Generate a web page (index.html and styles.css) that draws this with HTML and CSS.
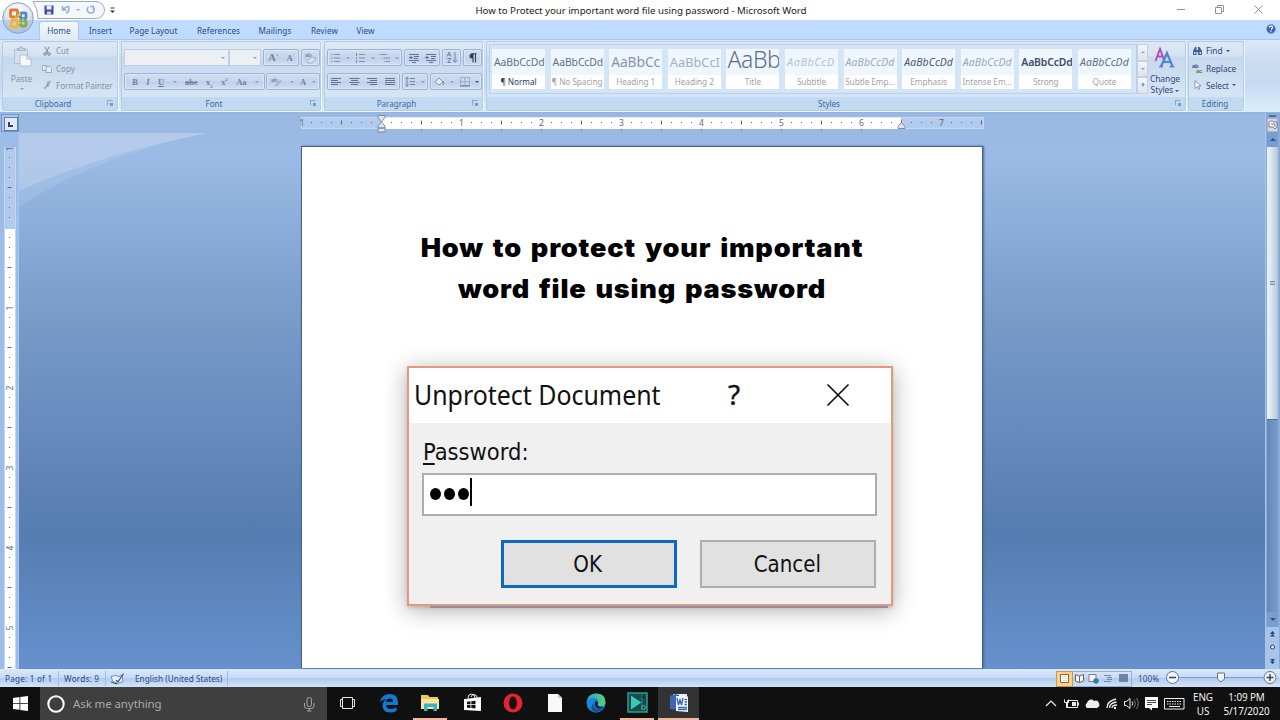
FILE: index.html
```html
<!DOCTYPE html>
<html lang="en">
<head>
<meta charset="utf-8">
<title>How to Protect your important word file using password - Microsoft Word</title>
<link rel="stylesheet" href="styles.css">
</head>
<body>
<div class="app">
  <header class="titlebar">
    <svg class="qat" width="122" height="20" viewBox="0 0 122 20">
      <path d="M33 1.5H96a8.5 8.5 0 0 1 0 17H38Q38 9 33 1.5Z" fill="#f4f7fb" stroke="#8d949e" stroke-width=".8"/>
      <path d="M44.500 5.500h9v9h-9z" fill="#4548a8"/><path d="M46.500 5.500h5v4h-5z" fill="#eef"/><path d="M47 11.500h4v3h-4z" fill="#ccd3ee"/>
      <path d="M62.500 6v4h4M63 9.500Q69 4 69 9q0 3-3 4" fill="none" stroke="#93a9ce" stroke-width="1.500"/>
      <path d="M76 9h4l-2 2z" fill="#a6abb8"/>
      <path d="M88.500 7a3.500 3.500 0 1 0 4.500 0M93.500 10V6.500H90" fill="none" stroke="#93a9ce" stroke-width="1.500"/>
      <path d="M110.500 7.500h4v1h-4zM110 10.500h5l-2.500 2.500z" fill="#333"/>
    </svg>
    <div class="title"><span>How to Protect your important word file using password - Microsoft Word</span></div>
    <svg class="wincontrols" width="120" height="20" viewBox="1160 0 120 20" fill="none" stroke="#888" stroke-width=".9">
      <path d="M1177 9.500h8M1254.500 5.500l8 8m0-8l-8 8M1215.500 7.500h6v6h-6zM1217.500 7.500v-2h6v6h-2"/>
    </svg>
  </header>

  <nav class="tabs">
    <div class="tab w-home active">Home</div><div class="tab w-insert">Insert</div><div class="tab w-layout">Page Layout</div><div class="tab w-refs">References</div><div class="tab w-mail">Mailings</div><div class="tab w-review">Review</div><div class="tab w-view">View</div>
    <svg class="help" width="12" height="12" viewBox="0 0 12 12"><circle cx="6" cy="6" r="4.500" fill="#3464b4" stroke="#86a7d7"/><path d="M4.300 4.600Q4.500 3.200 6 3.200T7.600 4.600Q7.600 5.500 6 6.400M6 7.600v1.200" stroke="#fff" stroke-width="1.200" fill="none"/></svg>
  </nav>

  <section class="ribbon">
    <div class="group g-clip">
      <div class="body clip">
        <div class="paste">
          <svg width="22" height="23" viewBox="0 0 22 23"><path d="M3.500 3.500h13v14h-13z" fill="#d5e0ee" stroke="#b4c1d2"/><path d="M6.500 4.500v-2h2l1-1.500h1.500l1 1.500h2v2z" fill="#c6d1df" stroke="#99a8ba" stroke-width=".8"/><path d="M9 9h7l4 4v7H9z" fill="#f5f8fc" stroke="#a9b7c9" stroke-width=".8"/><path d="M16 9v4h4" fill="none" stroke="#a9b7c9"/></svg>
          <span>Paste</span><i class="caret"></i>
        </div>
        <div class="clipcmds">
          <div><svg width="10" height="10" viewBox="0 0 10 10" fill="none" stroke="#7889a5"><path d="M3 1l3 6M7 1L4 7"/><circle cx="3" cy="8" r="1.300"/><circle cx="7" cy="8" r="1.300"/></svg>Cut</div>
          <div><svg width="10" height="10" viewBox="0 0 10 10" fill="#e5edf7" stroke="#8c9db5" stroke-width=".8"><path d="M.5 2.500h4l1 1v4h-5z"/><path d="M4 3.500h3.500l2 2v4H4z"/></svg>Copy</div>
          <div><svg width="10" height="10" viewBox="0 0 10 10"><path d="M9 .5L7.500 4.500 3.500 9 1 8l3-2L5.500 1.500z" fill="#9caec7"/><path d="M5 5l2 1" stroke="#6d83a5"/></svg>Format Painter</div>
        </div>
      </div>
      <div class="glabel">Clipboard<b class="launch"></b></div>
    </div>

    <div class="group g-font">
      <div class="body rows">
        <div class="row">
          <div class="combo c1"><i class="caret"></i></div><div class="combo c2"><i class="caret"></i></div>
          <div class="btns b-grow"><span class="srf big">A<sup>^</sup></span><span class="srf">A<sup>ˇ</sup></span></div>
          <div class="btns b-clear"><svg width="14" height="14" viewBox="0 0 14 14"><text x="1" y="6" class="tiny">ab</text><path d="M3 10l5-4 4 1-4 5H4z" fill="#d9e2ef" stroke="#8c9db8" stroke-width=".7"/></svg></div>
        </div>
        <div class="row">
          <div class="btns b-fmt"><span class="srf">B</span><span class="srf it">I</span><span class="srf un">U</span><i class="caret"></i><span class="srf st">abc</span><span class="srf">x<sub>2</sub></span><span class="srf">x<sup>2</sup></span><span class="srf">Aa</span><i class="caret"></i></div>
          <div class="btns b-color"><svg width="14" height="12" viewBox="0 0 14 12"><text x="1" y="6" class="tiny">ab</text><path d="M4 10l6-6 2 1-5 5z" fill="#a8b6cb"/></svg><i class="caret"></i><span class="srf">A</span><i class="caret"></i></div>
        </div>
      </div>
      <div class="glabel">Font<b class="launch"></b></div>
    </div>

    <div class="group g-para">
      <div class="body rows">
        <div class="row p">
          <div class="btns p1">
            <svg width="12" height="12" viewBox="0 0 12 12" stroke="#7689aa" stroke-width=".9"><path d="M1 2.500h1.500M1 6h1.500M1 9.500h1.500M4 2.500h6M4 6h6M4 9.500h6"/></svg><i class="caret"></i>
            <svg width="12" height="12" viewBox="0 0 12 12" stroke="#7689aa" stroke-width=".9"><path d="M1.500 1v3M1.500 5v2M1.500 8v3M4 2.500h6M4 6h6M4 9.500h6"/></svg><i class="caret"></i>
            <svg width="12" height="12" viewBox="0 0 12 12" stroke="#7689aa" stroke-width=".9"><path d="M0 2.500h1M2 2.500h6M3 6h1M5 6h6M5 9.500h1M7 9.500h4"/></svg><i class="caret"></i>
          </div>
          <div class="btns p2">
            <svg width="12" height="12" viewBox="0 0 12 12" stroke="#5f7295"><path d="M1 2.500h10M6 4.500h5M6 6.500h4M1 8.500h10M4 10.500h4M1 5.500h4M3 4v3"/></svg>
            <svg width="12" height="12" viewBox="0 0 12 12" stroke="#5f7295"><path d="M1 2.500h10M6 4.500h5M6 6.500h4M1 8.500h10M4 10.500h4M0 5.500h4M2 4v3"/></svg>
          </div>
          <div class="btns p3"><svg width="12" height="13" viewBox="0 0 12 13" fill="none" stroke="#7186a9"><path d="M1 5.500L3 1l2 4.500M2 4h2M1.500 7.500H5l-3.500 4H5M9 1v10M7 9l2 2.500L11 9"/></svg></div>
          <div class="btns p4"><svg width="10" height="12" viewBox="0 0 10 12"><path d="M5 2v8.500M7.500 2v8.500M3.500 1.800h5" stroke="#343e54" stroke-width="1.100"/><path d="M5 1.500H4a2.300 2.300 0 0 0 0 5h1z" fill="#343e54"/></svg></div>
        </div>
        <div class="row p">
          <div class="btns p5">
            <svg width="11" height="10" viewBox="0 0 11 10" stroke="#5f7295"><path d="M0 1.500h10M0 3.500h7M0 5.500h10M0 7.500h7"/></svg>
            <svg width="11" height="10" viewBox="0 0 11 10" stroke="#5f7295"><path d="M.5 1.500h10M2 3.500h7M.5 5.500h10M2 7.500h7"/></svg>
            <svg width="11" height="10" viewBox="0 0 11 10" stroke="#5f7295"><path d="M0 1.500h10M3 3.500h7M0 5.500h10M3 7.500h7"/></svg>
            <svg width="11" height="10" viewBox="0 0 11 10" stroke="#5f7295"><path d="M0 1.500h10M0 3.500h10M0 5.500h10M0 7.500h10"/></svg>
          </div>
          <div class="btns p6"><svg width="12" height="12" viewBox="0 0 12 12" fill="none" stroke="#7186a9"><path d="M2 1v9M.5 3L2 1l1.500 2M.5 8.500L2 10.500l1.500-2M5 2.500h5M5 5.500h5M5 8.500h5"/></svg><i class="caret"></i></div>
          <div class="btns p7"><svg width="13" height="12" viewBox="0 0 13 12"><path d="M2 6l4-4 4 4-4 3z" fill="#e6eef8" stroke="#8497b6"/><path d="M10 5q2 3 0 4" stroke="#667da3" fill="none"/></svg><i class="caret"></i><svg width="12" height="12" viewBox="0 0 12 12" fill="none" stroke="#8497b6"><path d="M1.500 1.500h9v8h-9zM6 1.500v8M1.500 5.500h9" stroke-dasharray="1 .6"/><path d="M1 10h10" stroke="#5f7295"/></svg><i class="caret dk"></i></div>
        </div>
      </div>
      <div class="glabel">Paragraph<b class="launch"></b></div>
    </div>

    <div class="group g-styles">
      <div class="body stylesbody">
        <div class="gallery">
          <div class="st-item"><p>AaBbCcDd</p><span class="on">¶ Normal</span></div>
          <div class="st-item"><p>AaBbCcDd</p><span>¶ No Spacing</span></div>
          <div class="st-item"><p class="h1">AaBbCc</p><span>Heading 1</span></div>
          <div class="st-item"><p class="h2">AaBbCcI</p><span>Heading 2</span></div>
          <div class="st-item"><p class="ttl">AaBb</p><span>Title</span></div>
          <div class="st-item"><p class="sub">AaBbCcD</p><span>Subtitle</span></div>
          <div class="st-item"><p class="se">AaBbCcDd</p><span>Subtle Emp...</span></div>
          <div class="st-item"><p class="em">AaBbCcDd</p><span>Emphasis</span></div>
          <div class="st-item"><p class="ie">AaBbCcDd</p><span>Intense Em...</span></div>
          <div class="st-item"><p class="strong">AaBbCcDd</p><span>Strong</span></div>
          <div class="st-item"><p class="q">AaBbCcDd</p><span>Quote</span></div>
        </div>
        <div class="gscroll"><div><i class="up"></i></div><div><i class="caret"></i></div><div><i class="caret more"></i></div></div>
        <div class="change">
          <svg width="22" height="22" viewBox="0 0 22 22" fill="none"><path d="M1.500 14L6 2l4.500 12M3 9.500h6" stroke="#b650b9" stroke-width="2"/><path d="M7 19.500L13 6l5.500 13.500M9 15h8" stroke="#4f84d0" stroke-width="2.200"/><path d="M5 19.800h4M15.500 19.800h5" stroke="#3469b5"/></svg>
          <span>Change</span><span>Styles <i class="caret dk"></i></span>
        </div>
      </div>
      <div class="glabel">Styles<b class="launch"></b></div>
    </div>

    <div class="group g-edit">
      <div class="body editcmds">
        <div><svg width="11" height="10" viewBox="0 0 11 10" fill="#405f95"><path d="M1 9V5l2-4h1.500V9zM6 9V1h1.500l2.500 4v4z"/><path d="M4 4h3v2H4z"/><path d="M2 6h1.500v2H2zM7.500 6H9v2H7.500z" fill="#cddcf2"/></svg>Find <i class="caret dk"></i></div>
        <div><svg width="11" height="10" viewBox="0 0 11 10"><text x="0" y="5" class="tiny dkt">ab</text><text x="4" y="10" class="tiny grn">ac</text></svg>Replace</div>
        <div><svg width="11" height="10" viewBox="0 0 11 10"><path d="M3 .7v8l2-2 1.500 3 1.200-.7L6.300 6H9z" fill="#fff" stroke="#7083a5" stroke-width=".8"/></svg>Select <i class="caret dk"></i></div>
      </div>
      <div class="glabel">Editing</div>
    </div>
  </section>

  <svg class="orb" width="36" height="36" viewBox="0 0 36 36">
    <defs><radialGradient id="orb" cx=".5" cy=".3" r=".7"><stop offset="0" stop-color="#fff"/><stop offset=".55" stop-color="#e4e9f0"/><stop offset="1" stop-color="#a9b9d3"/></radialGradient></defs>
    <circle cx="18" cy="18" r="15.300" fill="url(#orb)" stroke="#8ea3c4"/>
    <path d="M4 21a14.500 14.500 0 0 0 28 0Q18 16 4 21" fill="#b4c3d9" opacity=".7"/>
    <g fill="none" stroke-width="2.800"><rect x="10.500" y="10" width="7" height="7" rx="1" stroke="#e07a2c"/><rect x="20.500" y="13" width="5.500" height="5.500" rx="1" stroke="#4a8ccb"/><rect x="11.500" y="20.500" width="6" height="6.500" rx="1" stroke="#edb83a"/><rect x="20.500" y="20.500" width="5.500" height="5.500" rx="1" stroke="#7db054"/></g>
    <path d="M17 15h3v-2m-4 6v-3m7 5v-3m-5 5h3" stroke="#f5c15c" stroke-width="1.300" fill="none"/>
  </svg>

  <main class="work">
    <svg class="swoosh" width="200" height="80" viewBox="0 0 200 80"><path d="M0 0H189Q75 23 0 74Z" fill="#fff" opacity=".1"/><path d="M0 0H189Q85 20 0 58Z" fill="#fff" opacity=".17"/></svg>
    <aside class="vside">
      <div class="tabsel"><b></b></div>
      <svg class="vruler" width="12" height="522" viewBox="0 0 12 522">
        <defs><pattern id="vt" width="12" height="80" patternUnits="userSpaceOnUse"><path d="M5 10.500h1M5 20.500h1M5 30.500h1M3.500 40.500h4M5 50.500h1M5 60.500h1M5 70.500h1" stroke="#536487"/></pattern></defs>
        <rect width="12" height="82" fill="#b2caec"/><rect y="82" width="12" height="440" fill="#fff"/>
        <path d="M.5 0v522M11.500 0v522" stroke="#c5d8f2"/>
        <rect width="12" height="522" fill="url(#vt)"/>
        <g class="rnum"><text transform="translate(8.500 1.500) rotate(-90)">1</text><text transform="translate(8.500 161) rotate(-90)">1</text><text transform="translate(8.500 241) rotate(-90)">2</text><text transform="translate(8.500 321) rotate(-90)">3</text><text transform="translate(8.500 401) rotate(-90)">4</text><text transform="translate(8.500 481) rotate(-90)">5</text></g>
      </svg>
    </aside>
    <div class="canvas">
      <svg class="hruler" width="692" height="21" viewBox="296 112 692 21">
        <defs><pattern id="ht" x="301" y="117" width="80" height="16" patternUnits="userSpaceOnUse"><path d="M10.500 5v1M20.500 5v1M30.500 5v1M40.500 3.500v4M50.500 5v1M60.500 5v1M70.500 5v1" stroke="#536487"/></pattern></defs>
        <path d="M301.500 117.500h682v11h-682z" fill="#b2caec" stroke="#c8daf2"/>
        <path d="M381 117.500h520v11.500H381z" fill="#fff"/>
        <path d="M301 117h682v12H301z" fill="url(#ht)"/>
        <path d="M421.500 129v2m40-2v2m40-2v2m40-2v2m40-2v2m40-2v2m40-2v2m40-2v2m40-2v2m40-2v2m40-2v2m40-2v2" stroke="#6f8cb9"/>
        <g class="rnum"><text x="302" y="126">1</text><text x="461.500" y="126">1</text><text x="541.500" y="126">2</text><text x="621.500" y="126">3</text><text x="701.500" y="126">4</text><text x="781.500" y="126">5</text><text x="861.500" y="126">6</text><text x="941.500" y="126">7</text></g>
        <g fill="#dbe5f2" stroke="#75849c" stroke-width=".9"><path d="M378 115.500h7v2l-3.500 4.500-3.500-4.500zM378 128v-2l3.500-4 3.500 4v2zM378 128h7v4h-7zM898 128.500v-2l3.500-4 3.500 4v2z"/></g>
      </svg>
      <article class="page">
        <h1><span>How to protect your important</span><span>word file using password</span></h1>
        <div class="dlgpic">
          <div class="dialog">
            <div class="dtitle"><span class="dt"><span class="fit t1">Unprotect Document</span></span><span class="dq"><span class="fit t2">?</span></span><svg width="24" height="24" viewBox="0 0 24 24"><path d="M1.500 1.500l21 21m0-21l-21 21" stroke="#111" stroke-width="1.700"/></svg></div>
            <div class="dlabel"><span class="fit t3"><u>P</u>assword:</span></div>
            <div class="dinput"><b></b><b></b><b></b><i></i></div>
            <div class="dbtns"><div class="db ok"><span class="fit">OK</span></div><div class="db"><span class="fit">Cancel</span></div></div>
          </div>
          <div class="edge"></div>
        </div>
      </article>
    </div>
    <div class="vscroll">
      <div class="split"></div>
      <div class="rtoggle"><svg width="10" height="10" viewBox="0 0 10 10" fill="#f4f4f6" stroke="#64666e" stroke-width=".8"><path d="M1 2.500l1.500-1.500h2l1 1H9v5L7 9 5 7H1z"/><path d="M3 4h4v3"/></svg></div>
      <div class="arrow"><i class="up navy"></i></div>
      <div class="thumb"><b></b></div>
      <div class="track"></div>
      <div class="arrow"><i class="caret navy"></i></div>
      <svg class="browse" width="13" height="42" viewBox="0 0 13 42"><path d="M0 0h13v42H0z" fill="#a9c4ea"/><path d="M4 7l2.500-3L9 7zM4 9.500L6.500 7 9 9.500zM4 32h5l-2.500 2.500zM4 34.500h5L6.500 37z" fill="#243e67"/><circle cx="6.500" cy="20" r="2" fill="#e8eef8" stroke="#243e67"/></svg>
    </div>
  </main>

  <footer class="status">
    <span class="s1">Page: 1 of 1</span><span class="s2">Words: 9</span>
    <span class="s3"><svg width="15" height="13" viewBox="0 0 15 13"><path d="M1 4.500l5-1 2 1 4-1 1 6-5 2-5-2z" fill="#edf3fb" stroke="#5c77a7" stroke-width=".8"/><path d="M6 8l2 2 5.500-8.500M1 10l6 2" fill="none" stroke="#36558c" stroke-width="1.300"/></svg></span>
    <span class="s4">English (United States)</span><span class="grow"></span>
    <div class="views">
      <span class="sel"><svg width="11" height="11" viewBox="0 0 11 11"><path d="M1.500 1.500h8v8h-8z" fill="#fffdf5" stroke="#7b6850"/><path d="M3 3.500h5M3 5.500h5M3 7.500h5" stroke="#d4c9a8" stroke-width=".6"/></svg></span>
      <span><svg width="11" height="11" viewBox="0 0 11 11" fill="#f9fbff" stroke="#60625f"><path d="M1.500 1.500l4 1.500 4-1.500V8L5.500 9.500 1.500 8zM5.500 3v6.500"/></svg></span>
      <span><svg width="11" height="11" viewBox="0 0 11 11"><path d="M1 1.500h7v7H1z" fill="#f8faff" stroke="#727c8e"/><circle cx="8" cy="8" r="2.700" fill="#327e97"/></svg></span>
      <span><svg width="11" height="11" viewBox="0 0 11 11" stroke="#7789a9"><path d="M1 2.500h7M4 4.500h5M4 6.500h5M1 8.500h7"/></svg></span>
      <span><svg width="11" height="11" viewBox="0 0 11 11" stroke="#53688e"><path d="M1 2h9M1 4h9M1 6h9M1 8h9" stroke-width="1.300"/></svg></span>
    </div>
    <span class="pct">100%</span>
    <svg class="zoom" width="118" height="18" viewBox="1162 669 118 18" fill="none"><path d="M1179 677.500h84M1221 674v7" stroke="#7f9bc5"/><g fill="#f1f5fb" stroke="#62728d"><circle cx="1172.500" cy="677.500" r="6"/><circle cx="1270" cy="677.500" r="6"/><path d="M1217.500 673h7v6l-3.500 3-3.500-3z"/></g><path d="M1169 677.500h7M1266.500 677.500h7M1270 674v7" stroke="#3a4659" stroke-width="1.500"/></svg>
  </footer>

  <footer class="taskbar">
    <div class="start"><svg width="15" height="15" viewBox="0 0 15 15" fill="#fff"><path d="M0 2l6.500-1v6H0zM7.300.9L15 0v7H7.300zM0 7.700h6.500v6L0 13zM7.300 7.700H15V15l-7.700-1z"/></svg></div>
    <div class="search"><svg width="20" height="20" viewBox="0 0 20 20"><circle cx="10" cy="10" r="7.700" fill="none" stroke="#fff" stroke-width="2"/></svg><span>Ask me anything</span><svg class="mic" width="12" height="16" viewBox="0 0 12 16" fill="none" stroke="#a5a5a5"><rect x="4" y="1.500" width="4.500" height="9" rx="2"/><path d="M1.500 7v3q0 2.500 3 2.500h3.500q3 0 3-2.500V7M6.200 12.500V15M4 15h4.500"/></svg></div>
    <div class="app-i"><svg width="18" height="16" viewBox="0 0 18 16" fill="none" stroke="#e8e8e8"><path d="M3.500 2.500h10v11h-10zM3.500 4.500h-2v7h2M13.500 4.500h2v7h-2"/></svg></div>
    <div class="app-i"><svg width="20" height="20" viewBox="0 0 20 20"><path d="M1 9Q3 1 10.500 1 19 1 19 10v2H7q.5 4 5 4 3 0 5.500-1.700V18Q14.500 19.700 11 19.500 3.500 19 3.500 12.500 3.500 8 8 6 4 6 1 9M7 8.700h7Q14 5.500 11 5.500 8 5.500 7 8.700" fill="#1479d4"/></svg></div>
    <div class="app-i run"><svg width="20" height="18" viewBox="0 0 20 18"><path d="M1 3V1h7l1.500 2H18v12H1z" fill="#edc65c"/><path d="M1 5h18v10H1z" fill="#fbe697"/><path d="M4 17V9.500h13V17h-3.500v-4h-6v4z" fill="#35b3ca"/></svg></div>
    <div class="app-i"><svg width="20" height="20" viewBox="0 0 20 20"><path d="M6 5q0-4 3.500-4T13 5M9 4q1-3 3.500-2.500T15 4.500" fill="none" stroke="#eee"/><path d="M2 6l17-2v14L2 17z" fill="#fff"/><path d="M5 8.700l3.500-.4v3H5zM9.300 8.200l4.200-.4v3.500H9.300zM5 12h3.500v3L5 14.700zM9.300 12h4.200v3.500l-4.200-.4z" fill="#111"/></svg></div>
    <div class="app-i"><svg width="20" height="20" viewBox="0 0 20 20"><path fill-rule="evenodd" d="M10 .5a9.500 9.500 0 1 0 0 19 9.500 9.500 0 0 0 0-19M10 3.500c2.500 0 3.800 3 3.800 6.500s-1.300 6.500-3.800 6.500S6.200 13.500 6.200 10s1.300-6.500 3.800-6.500" fill="#e52333"/></svg></div>
    <div class="app-i"><svg width="16" height="20" viewBox="0 0 16 20"><path d="M1 1h10l4 4v14H1z" fill="#f8f8f8"/><path d="M11 1v4h4z" fill="#c8c8c8"/></svg></div>
    <div class="app-i"><svg width="20" height="20" viewBox="0 0 20 20"><defs><linearGradient id="eg"><stop stop-color="#249fe1"/><stop offset="1" stop-color="#5fd36b"/></linearGradient></defs><circle cx="10" cy="10" r="9.500" fill="#1689d8"/><path d="M.6 9Q2 .5 10 .5q9.500 0 9.500 8.500 0 5-6.500 4-2-1-1-3 1-5-4-5-5 0-7.400 4" fill="url(#eg)"/><path d="M7 10q0 5 5 6 4 0 6-2-4 6-9.500 5.400Q3 17 7 10" fill="#174e96"/><path d="M9.500 8q3 0 2.500 3-1 2 2 2.700l4 .3Q14 17 11 15T8.500 11z" fill="#152436"/></svg></div>
    <div class="app-i run"><svg width="21" height="21" viewBox="0 0 21 21"><path d="M1 1h19v19H1z" fill="#174b4c" stroke="#2c9b91" stroke-width="1.500"/><path d="M4 3.500l10.500 7L4 17.500z" fill="#3bc9b6"/><path d="M15 3v15" stroke="#2b8a82"/><circle cx="16.500" cy="5" r="1.500" fill="#0c2f32"/><circle cx="16.500" cy="15.500" r="2" fill="none" stroke="#49afa4"/></svg></div>
    <div class="app-i run current"><svg width="22" height="20" viewBox="0 0 22 20"><path d="M5 1h14v14H7z" fill="#e6effb"/><path d="M2 3q5-3 9-1v15l-9-1z" fill="#3e66b3"/><path d="M8 3l12 .5V19L8 18z" fill="#f7faff"/><path d="M9 5l1.500 7L12 7l1.500 5L15 5M16.500 6.500H19M16.500 9H19M16.500 11.500H19M10 14.500h9M10 16.500h9" fill="none" stroke="#3869b7" stroke-width="1.400"/></svg></div>
    <span class="grow"></span>
    <svg class="tray" width="150" height="33" viewBox="1040 687 150 33" fill="none" stroke="#eee">
      <path d="M1046 706l5-5 5 5" stroke-width="1.200"/>
      <path d="M1067.500 700.500h10v7h-10zM1078.500 702.500v3M1064.500 699.500v3h4v-3M1066.500 702.500v5h2" /><path d="M1072 702h4v4h-4z" fill="#eee" stroke="none"/>
      <path d="M1087 708a3 3 0 0 1 0-5 4 4 0 0 1 7-2 3.500 3.500 0 0 1 3 7z" fill="#eee" stroke="none"/>
      <path d="M1107 708q0-7 9-9M1109.500 708q0-5 7-6M1112 708q0-3 5-3" stroke-width="1.300"/><circle cx="1115" cy="708" r="1.200" fill="#eee" stroke="none"/>
      <path d="M1124.500 701.500h2l3.500-3v10l-3.500-3h-2zM1132 701.500q1.500 2 0 4"/><path d="M1134 699.500q3 4 0 8M1136.500 698q3.500 5.500 0 11" stroke="#777"/>
      <path d="M1145 697h13v11h-6v2.500l-3-2.500h-4z" fill="#fff" stroke="none"/><path d="M1147 700.500h9M1147 702.500h9M1147 704.500h5" stroke="#333" stroke-width=".9"/>
      <path d="M1164.500 698.500h19.500v10.500h-19.500z"/><path d="M1167 701.500h15M1167 704h15" stroke-dasharray="1.500 1"/><path d="M1169 706.500h11"/>
    </svg>
    <div class="lang"><span>ENG</span><span>US</span></div>
    <div class="clock"><span>1:09 PM</span><span>5/17/2020</span></div>
  </footer>
</div>
</body>
</html>
```
FILE: styles.css
```css
* { box-sizing: border-box; }
body { margin: 0; width: 1280px; height: 720px; overflow: hidden; font-family: "Noto Sans", "Open Sans", sans-serif; }
svg { display: block; flex: none; }
.app { position: relative; display: flex; flex-direction: column; width: 1280px; height: 720px; color: #2f4a7c; font-size: 8.2px; letter-spacing: -.08px; }
.grow { flex: 1; }

/* title bar */
.titlebar { display: flex; height: 20px; background: #fff; }
.title { flex: 1; text-align: center; font-size: 9.7px; line-height: 21px; color: #222; white-space: nowrap; letter-spacing: -.03px; }
.orb { position: absolute; left: 0; top: 0; }

/* tabs */
.tabs { display: flex; height: 20px; padding-left: 39px; background: #bfdbff; border-bottom: 1px solid #a9c5ec; letter-spacing: .06px; }
.tab { height: 20px; line-height: 21px; text-align: center; white-space: nowrap; }
.tab.active { background: linear-gradient(#f3f8fe, #dde9f8); border: 1px solid #a9c6ee; border-bottom: 0; border-radius: 3px 3px 0 0; line-height: 18px; margin-top: 1px; }
.w-home { width: 40px; } .w-insert { width: 43px; } .w-layout { width: 63px; } .w-refs { width: 67px; }
.w-mail { width: 46px; } .w-review { width: 53px; } .w-view { width: 29px; }
.help { margin: 3px 3px 0 auto; }

/* ribbon */
.ribbon { display: flex; gap: 3px; height: 73px; padding: 1px 2px 1px; background: linear-gradient(#dbe7f5, #cbdcf1 30%, #c5d9f0 60%, #d9effc); border-bottom: 1px solid #8fb6dd; }
.group { display: flex; flex-direction: column; height: 70px; border: 1px solid #b4cce8; border-radius: 2px; background: linear-gradient(#dfe9f5 0, #d5e2f1 14px, #c7d8ed 15px, #d6e6f6 57px); box-shadow: 1px 1px 0 #eef6fd; }
.g-clip { width: 116px; } .g-font { width: 200px; } .g-para { width: 159px; } .g-styles { width: 700px; } .g-edit { width: 56px; margin-left: -1px; }
.body { height: 56px; }
.glabel { position: relative; flex: 1; padding-right: 14px; background: #c1d9f1; text-align: center; line-height: 13px; color: #4467a3; }
.g-edit .glabel { padding-right: 2px; }
.launch { position: absolute; right: 4px; top: 3px; width: 6px; height: 6px; border: 1px solid #8ca5ca; border-right-color: transparent; border-bottom-color: transparent; }
.launch::after { content: ""; position: absolute; right: -1px; bottom: -1px; width: 3px; height: 3px; background: #7f98bf; }
.caret { display: inline-block; flex: none; border: 2px solid transparent; border-top-color: #8d9cb7; border-bottom: 0; }
.caret.dk { border-top-color: #33517f; vertical-align: middle; }
.up { display: inline-block; border: 2px solid transparent; border-bottom-color: #97a4b8; border-top: 0; }
.navy.up { border-width: 0 3px 3px; border-bottom-color: #32517f; } .navy.caret { border-width: 3px 3px 0; border-top-color: #32517f; }

.clip { display: flex; color: #8593a8; }
.paste { display: flex; flex-direction: column; align-items: center; width: 37px; padding-top: 4px; font-size: 8.6px; }
.paste span { line-height: 12px; margin-top: 4px; } .paste .caret { margin-top: 3px; }
.clipcmds div { display: flex; align-items: center; gap: 4px; height: 17.4px; margin-left: 2px; white-space: nowrap; }
.clipcmds { padding-top: 0; }

.rows { display: flex; flex-direction: column; gap: 7px; padding: 7px 0 0 2px; }
.row { display: flex; height: 17px; }
.row.p { gap: 2px; padding-left: 0; }
.combo { display: flex; align-items: center; justify-content: flex-end; padding-right: 3px; background: #edf0f3; border: 1px solid #c0cfe3; }
.c1 { width: 106px; } .c2 { width: 32px; }
.btns { display: flex; align-items: center; justify-content: space-around; border: 1px solid #9bb4d8; border-radius: 2px; background: linear-gradient(#d1deef, #c5d5eb 50%, #bdd0e9 51%, #cfdff3); color: #6e80a0; box-shadow: inset 0 0 0 1px #d9e6f5; }
.b-grow { width: 36px; margin-left: 2px; } .b-clear { width: 19px; margin-left: 2px; }
.b-fmt { width: 142px; padding: 0 1px 0 3px; } .b-color { width: 54px; margin-left: 1px; }
.p1 { width: 76px; } .p2 { width: 36px; } .p3 { width: 19px; } .p4 { width: 19px; }
.p5 { width: 73px; } .p6 { width: 26px; } .p7 { width: 52px; }
.srf { font-family: "Liberation Serif", serif; font-weight: bold; font-size: 8.5px; line-height: 12px; }
.srf.big { font-size: 10.500px; } .srf sup, .srf sub { font-size: 5px; line-height: 0; }
.it { font-style: italic; } .un { text-decoration: underline; } .st { text-decoration: line-through; }
.tiny { font: bold 6px "Liberation Sans", sans-serif; fill: #7788a6; letter-spacing: -.3px; } .dkt { fill: #35537f; } .grn { fill: #3f8c4b; }

.stylesbody { display: flex; padding: 2px 0 0 2px; }
.gallery { display: flex; gap: 5.600px; width: 648px; height: 50px; padding: 4px 0 0 2px; background: #d4e5f8; border: 1px solid #b9d0ec; }
.st-item { flex: none; width: 53px; height: 40px; background: linear-gradient(#eff6ff 26px, #fff 26px); text-align: center; overflow: hidden; white-space: nowrap; }
.st-item p { margin: 0; height: 26px; line-height: 26px; padding-left: 2px; text-align: left; font-size: 10.400px; color: #616e84; overflow: hidden; letter-spacing: -.08px; }
.st-item span { display: block; line-height: 13px; color: #a2a29f; letter-spacing: -.03px; }
.st-item span.on { color: #28396b; }
.st-item .h1 { font-size: 13.800px; color: #8894a8; } .st-item .h2 { font-size: 12.800px; color: #a5aebb; letter-spacing: 0; }
.st-item .ttl { font-size: 23px; line-height: 20px; font-weight: 300; color: #5f7085; padding-left: 1px; letter-spacing: -.4px; } .st-item .sub { font-size: 11px; font-style: italic; color: #bac3cf; letter-spacing: .5px; }
.se, .em, .ie, .q { font-style: italic; } .st-item .se { color: #a0a8b5; } .st-item .em { color: #49566f; } .st-item .ie { color: #9ca8b9; } .st-item .strong { font-weight: 600; color: #3f4d6a; }
.st-item .se, .st-item .em, .st-item .ie, .st-item .q { letter-spacing: .14px; }
.st-item .strong { letter-spacing: -.15px; }
.gscroll { display: flex; flex-direction: column; width: 11px; height: 50px; }
.gscroll div { flex: 1; display: flex; align-items: center; justify-content: center; background: linear-gradient(#f3f5f8, #dce4ef); border: 1px solid #c4d0e1; }
.more { border-top-width: 3px; box-shadow: 0 -2px 0 -1px #8d9cb7; }
.change { display: flex; flex-direction: column; align-items: center; width: 36px; margin-left: -1px; padding-top: 3px; font-size: 8.500px; }
.change span { line-height: 11px; white-space: nowrap; } .change svg { margin-bottom: 4px; }
.editcmds { padding-top: 0; } .editcmds div { display: flex; align-items: center; gap: 3px; height: 17.400px; padding-left: 3px; font-size: 8.400px; }

/* workspace */
.work { position: relative; display: flex; height: 556px; background: linear-gradient(#9ab8e2, #9bbae5 45px, #7598c7 220px, #567db0 420px, #6691cd); }
.swoosh { position: absolute; left: 19px; top: 20px; }
.vside { width: 19px; background: #9dbce8; padding: 1px 0 0 1px; border-right: 1px solid #a8c5ee; }
.tabsel { width: 18px; height: 18px; border: 1px solid #6f92cb; padding: 2px; background: #a9c6f0; }
.tabsel::before { content: ""; display: block; width: 12px; height: 12px; border: 1px solid #637ea8; background: #e1eaf7; }
.tabsel b { display: block; width: 5px; height: 5px; margin: -9px 0 0 4px; border-left: 2px solid #33415d; border-bottom: 2px solid #33415d; }
.vruler { margin: 15px 0 0 3px; }
.rnum { font-size: 8.500px; fill: #5a6780; text-anchor: middle; }
.canvas { flex: 1; display: flex; flex-direction: column; }
.hruler { margin: -1px 0 0 277px; }
.page { width: 682px; height: 522px; margin: 13px 0 0 282px; background: #fff; border: 1px solid #45618c; border-bottom: 0; overflow: hidden; box-shadow: 1px 0 2px #4b6998; }
h1 { margin: 80px 0 0; font: 900 25.500px/41px Inter, "Liberation Sans", sans-serif; color: #000; text-align: center; letter-spacing: .75px; word-spacing: 2.600px; white-space: nowrap; }
h1 span { display: block; transform: scaleX(1.063); }
.dlgpic { width: 533px; height: 292px; margin: 37px 0 0 83px; padding: 20px 0 0 22px; overflow: hidden; }
.dialog { width: 486px; height: 240px; border: 2px solid #e6997a; background: #f0f0f0; box-shadow: 0 4px 22px rgba(0,0,0,.32), 0 2px 3px rgba(0,0,0,.12); color: #111; letter-spacing: 0; }
.edge { width: 458px; height: 2px; margin-left: 23px; background: #8b8fae; }
.fit { display: inline-block; transform-origin: 0 50%; white-space: nowrap; }
.t1 { transform: scaleX(.94); } .t2 { transform: scaleX(1.05); -webkit-text-stroke: .4px #111; } .t3 { transform: scaleX(1.02); }
.dtitle { display: flex; align-items: center; height: 55px; background: #fff; padding-left: 5px; font-size: 26.500px; line-height: 34px; padding-bottom: 2px; }
.dt { width: 314px; } .dq { width: 98px; }
.dlabel { height: 50px; padding: 14px 0 0 14px; font: 23px/30px "DejaVu Sans Condensed", "DejaVu Sans", sans-serif; }
.dlabel u { text-decoration-thickness: 2px; text-underline-offset: 3px; }
.dinput { display: flex; align-items: center; gap: 3px; width: 455px; height: 43px; margin-left: 13px; padding: 0 0 3px 6px; border: 2px solid #adadad; background: #fff; }
.dinput b { width: 11px; height: 12px; border-radius: 50%; background: #000; margin-top: 1px; }
.dinput i { width: 2px; height: 28px; background: #000; margin: -2px 0 0 -2px; }
.dbtns { display: flex; gap: 23px; padding: 24px 0 0 92px; }
.db { display: flex; align-items: center; justify-content: center; width: 176px; height: 48px; border: 2px solid #adadad; background: #e1e1e1; font: 22.500px "DejaVu Sans Condensed", "DejaVu Sans", sans-serif; padding-right: 2px; }
.db .fit { transform-origin: 50% 50%; transform: scaleX(.98); }
.db.ok { border: 3px solid #0d69c9; }

.vscroll { display: flex; flex-direction: column; width: 15px; padding: 2px 2px 0 1px; background: #8aaad8; border-left: 1px solid #a9c5ed; }
.split { width: 7px; height: 2px; margin-left: 2px; background: #506f9f; }
.rtoggle { height: 14px; margin-top: 1px; background: #d4d9e2; border: 1px solid #a9b4c7; padding-top: 1px; }
.arrow { display: flex; align-items: center; justify-content: center; height: 15px; background: #799dd0; }
.thumb { display: flex; align-items: center; justify-content: center; height: 273px; border-radius: 1px; background: linear-gradient(90deg, #edf2f8, #dce5ef 40%, #b5c6da); border-bottom: 1px solid #54719b; }
.thumb b { width: 5px; height: 4px; border: solid #7f91aa; border-width: 1px 0; background: #bac6d6; }
.track { flex: 1; background: linear-gradient(90deg, #6587b8, #7b9ccb); }
.browse { margin-left: -1px; }

/* status bar */
.status { display: flex; align-items: center; height: 18px; border-top: 1px solid #d8e6f8; background: linear-gradient(#d9e7f9, #c6dbf6 45%, #b0ccf1 50%, #d4e4f8); white-space: nowrap; letter-spacing: .04px; }
.s1, .s2, .s3, .s4 { height: 15px; line-height: 15px; border-right: 1px solid #9fbce3; }
.s1 { width: 59px; padding-left: 5px; letter-spacing: .2px; } .s2 { width: 47px; padding-left: 5px; letter-spacing: .2px; } .s3 { width: 20px; padding: 1px 0 0 4px; border: 0; } .s4 { width: 102px; padding-left: 9px; }
.views { display: flex; height: 16px; width: 76px; border: 1px solid #93afd8; margin-right: 6px; }
.views span { display: flex; width: 15px; align-items: center; justify-content: center; }
.views .sel { background: #ffcf82; outline: 1px solid #c29b57; }
.pct { width: 24px; }
.zoom { margin-top: -1px; }

/* taskbar */
.taskbar { display: flex; height: 33px; background: #101010; color: #f2f2f2; }
.start { display: flex; align-items: center; justify-content: center; width: 40px; }
.search { display: flex; align-items: center; width: 287px; padding: 0 12px 0 6px; background: #3f3f3f; color: #a9a9a9; font-size: 11.500px; letter-spacing: -.1px; }
.search span { margin-left: 7px; } .mic { margin-left: auto; }
.app-i { display: flex; align-items: center; justify-content: center; width: 41.400px; border-bottom: 2px solid transparent; }
.run { width: 34px; margin: 0 3.700px; border-bottom-color: #efb89d; }
.current { width: 41.400px; margin: 0; background: #333; }
.lang, .clock { display: flex; flex-direction: column; align-items: center; justify-content: center; font-size: 9.900px; line-height: 14px; letter-spacing: -.1px; white-space: nowrap; }
.lang { width: 26px; } .clock { width: 61px; margin-right: 3px; }
```
